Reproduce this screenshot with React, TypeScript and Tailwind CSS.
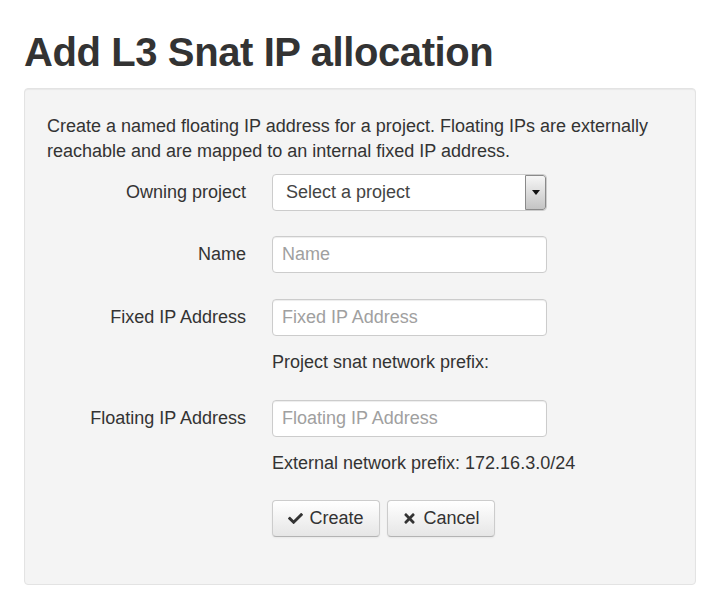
import { FaCheck, FaTimes } from "react-icons/fa";

const font = { fontFamily: '"Liberation Sans", Arial, sans-serif' };

const Field = ({ label, placeholder }: { label: string; placeholder: string }) => (
  <div className="flex items-center">
    <label className="w-[225px] text-right pr-[26px] text-[18px] text-[#333]">{label}</label>
    <input
      className="w-[275px] h-[37px] rounded-[4px] border border-[#ccc] bg-white px-[9px] text-[18px] text-[#555] placeholder:text-[#a0a0a0] shadow-[inset_0_1px_1px_rgba(0,0,0,0.075)] outline-none"
      placeholder={placeholder}
    />
  </div>
);

const Help = ({ children }: { children: React.ReactNode }) => (
  <div className="pl-[225px] text-[18px] text-[#333] leading-[20px]">{children}</div>
);

export default function App() {
  return (
    <div className="min-h-screen bg-white text-[#333]" style={font}>
      <div className="px-[24px] pt-[30px]">
        <h1 className="text-[40px] leading-[44px] font-bold text-[#333] tracking-[-0.4px]">
          Add L3 Snat IP allocation
        </h1>
        <div className="mt-[14px] h-[497px] rounded-[4px] border border-[#e3e3e3] bg-[#f4f4f4] shadow-[inset_0_1px_1px_rgba(0,0,0,0.05)] px-[22px] pt-[25px]">
          <p className="text-[18px] leading-[25px] text-[#333]">
            Create a named floating IP address for a project. Floating IPs are externally reachable and are mapped to
            an internal fixed IP address.
          </p>
          <div className="mt-[10px] flex flex-col">
            <div className="flex items-center">
              <label className="w-[225px] text-right pr-[26px] text-[18px] text-[#333]">Owning project</label>
              <div className="flex w-[275px] h-[37px] rounded-[4px] border border-[#ccc] bg-white overflow-hidden">
                <span className="flex-1 flex items-center pl-[13px] text-[18px] text-[#444]">Select a project</span>
                <span className="w-[21px] flex items-center justify-center border border-[#8a8a8a] rounded-r-[3px] bg-gradient-to-b from-[#f6f6f6] to-[#c4c4c4]">
                  <svg width="8" height="5" viewBox="0 0 8 5">
                    <path d="M0 0h8L4 5z" fill="#111" />
                  </svg>
                </span>
              </div>
            </div>
            <div className="mt-[25px]">
              <Field label="Name" placeholder="Name" />
            </div>
            <div className="mt-[26px]">
              <Field label="Fixed IP Address" placeholder="Fixed IP Address" />
            </div>
            <div className="mt-[16px]">
              <Help>Project snat network prefix:</Help>
            </div>
            <div className="mt-[28px]">
              <Field label="Floating IP Address" placeholder="Floating IP Address" />
            </div>
            <div className="mt-[16px]">
              <Help>External network prefix: 172.16.3.0/24</Help>
            </div>
            <div className="mt-[27px] pl-[225px] flex gap-[7px]">
              <button className="flex items-center justify-center gap-[6px] w-[108px] h-[37px] rounded-[4px] border border-[#ccc] border-b-[#b3b3b3] bg-gradient-to-b from-white to-[#e6e6e6] text-[18px] text-[#333] shadow-[0_1px_2px_rgba(0,0,0,0.05)]">
                <FaCheck className="text-[15px] text-[#333]" />
                Create
              </button>
              <button className="flex items-center justify-center gap-[6px] w-[108px] h-[37px] rounded-[4px] border border-[#ccc] border-b-[#b3b3b3] bg-gradient-to-b from-white to-[#e6e6e6] text-[18px] text-[#333] shadow-[0_1px_2px_rgba(0,0,0,0.05)]">
                <FaTimes className="text-[15px] text-[#333]" />
                Cancel
              </button>
            </div>
          </div>
        </div>
      </div>
    </div>
  );
}
